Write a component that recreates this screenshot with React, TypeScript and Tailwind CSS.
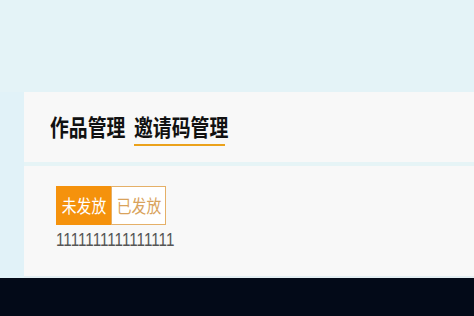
export default function App() {
  return (
    <div className="w-[474px] h-[316px] flex flex-col overflow-hidden bg-[#e4f3f7]" style={{ fontFamily: '"Noto Sans CJK SC", "Noto Sans", sans-serif' }}>
      <div className="flex flex-1 min-h-0 pt-[92px]">
        <div className="w-[24px] bg-[#e1f2f8]" />
        <div className="flex-1 flex flex-col bg-[#f8f8f8]">
          <div className="h-[70px] flex items-center pl-[26px] gap-[9px] pt-[2px]">
            <div className="w-[75px] pt-[4px] pb-[3px] border-b-2 border-transparent">
              <span className="inline-block origin-left scale-x-[0.82] whitespace-nowrap text-[23px] font-bold text-[#111] leading-none">作品管理</span>
            </div>
            <div className="w-[91px] pt-[4px] pb-[3px] border-b-2 border-[#eba21c]">
              <span className="inline-block origin-left scale-x-[0.82] whitespace-nowrap text-[23px] font-bold text-[#111] leading-none">邀请码管理</span>
            </div>
          </div>
          <div className="h-[4px] bg-[#e6f4f6]" />
          <div className="flex-1 flex flex-col pl-[32px] pt-[20px]">
            <div className="flex">
              <div className="h-[39px] w-[55px] flex items-center justify-center bg-[#f5920c] text-white border border-[#f5920c]">
                <span className="inline-block scale-x-[0.82] whitespace-nowrap text-[18px]">未发放</span>
              </div>
              <div className="h-[39px] w-[55px] flex items-center justify-center bg-white text-[#d9a35c] border border-[#e5b068]">
                <span className="inline-block scale-x-[0.82] whitespace-nowrap text-[18px]">已发放</span>
              </div>
            </div>
            <div className="mt-[3px] leading-[22px]">
              <span className="inline-block origin-left scale-x-[0.8] whitespace-nowrap text-[19px] text-[#555]" style={{ fontFamily: '"Liberation Sans", "Noto Sans CJK SC", sans-serif' }}>1111111111111111</span>
            </div>
          </div>
          <div className="h-[2px] bg-[#e3eef2]" />
        </div>
      </div>
      <div className="h-[38px] bg-[#030a18]" />
    </div>
  );
}
